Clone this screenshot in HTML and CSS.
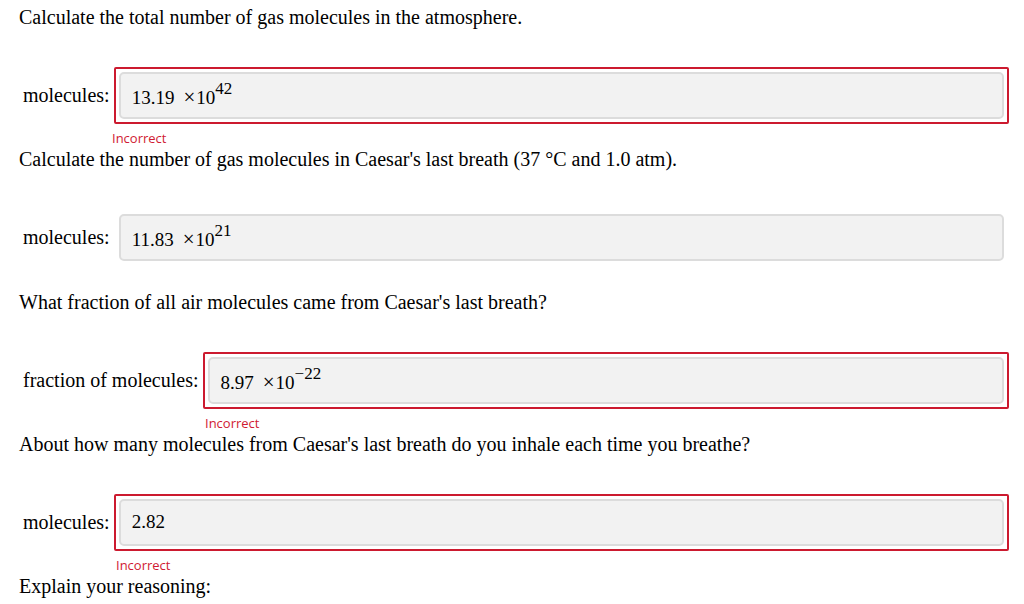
FILE: index.html
```html
<!DOCTYPE html>
<html>
<head>
<meta charset="utf-8">
<link rel="stylesheet" href="styles.css">
</head>
<body>
<div class="page">
  <p class="q q-first">Calculate the total number of gas molecules in the atmosphere.</p>
  <div class="row">
    <span class="label">molecules:</span>
    <div class="field error">
      <div class="box"><span class="val"><span class="num">13.19</span><span class="times">×</span><span class="ten">10</span><span class="exp">42</span></span></div>
    </div>
  </div>
  <div class="feedback">Incorrect</div>

  <p class="q">Calculate the number of gas molecules in Caesar's last breath (37 °C and 1.0 atm).</p>
  <div class="row">
    <span class="label">molecules:</span>
    <div class="field">
      <div class="box"><span class="val"><span class="num">11.83</span><span class="times">×</span><span class="ten">10</span><span class="exp">21</span></span></div>
    </div>
  </div>

  <p class="q q-after-plain">What fraction of all air molecules came from Caesar's last breath?</p>
  <div class="row">
    <span class="label">fraction of molecules:</span>
    <div class="field error">
      <div class="box"><span class="val"><span class="num">8.97</span><span class="times">×</span><span class="ten">10</span><span class="exp">−22</span></span></div>
    </div>
  </div>
  <div class="feedback fb-3">Incorrect</div>

  <p class="q">About how many molecules from Caesar's last breath do you inhale each time you breathe?</p>
  <div class="row">
    <span class="label">molecules:</span>
    <div class="field error">
      <div class="box"><span class="val"><span class="num">2.82</span></span></div>
    </div>
  </div>
  <div class="feedback fb-4">Incorrect</div>

  <p class="q">Explain your reasoning:</p>
</div>
</body>
</html>
```

FILE: styles.css
```css
html, body {
  margin: 0;
  padding: 0;
  background: #ffffff;
}

.page {
  padding: 6px 15px 0 19px;
  font-family: "Liberation Serif", "Times New Roman", serif;
  color: #000000;
}

.q {
  margin: 0;
  font-size: 20px;
  line-height: 23px;
}

.q-after-plain {
  margin-top: 25px;
}

.row {
  display: flex;
  align-items: center;
  margin-top: 38px;
  padding-left: 4px;
}

.label {
  font-size: 20px;
  line-height: 23px;
  white-space: nowrap;
  margin-right: 4px;
}

.field {
  flex: 1;
  border: 2px solid transparent;
  border-radius: 2px;
  padding: 3px;
}

.field.error {
  border-color: #cc1a2f;
}

.box {
  height: 43px;
  background: #f2f2f2;
  border: 2px solid #dcdcdc;
  border-radius: 5px;
  display: flex;
  align-items: center;
  padding-left: 11px;
  font-size: 19px;
  line-height: 21px;
  white-space: nowrap;
}

.val {
  display: block;
  padding-bottom: 3px;
}

.times {
  margin-left: 9px;
  font-size: 21px;
}

.ten {
  margin-left: 1px;
}

.exp {
  font-size: 17px;
  line-height: 1;
  vertical-align: 10px;
}

.feedback {
  margin: 5px 0 1px 93px;
  font-family: "Open Sans", "Noto Sans", sans-serif;
  font-size: 13px;
  line-height: 18px;
  color: #d01a32;
}

.fb-3 {
  margin-left: 186px;
}

.fb-4 {
  margin-left: 97px;
}
```
